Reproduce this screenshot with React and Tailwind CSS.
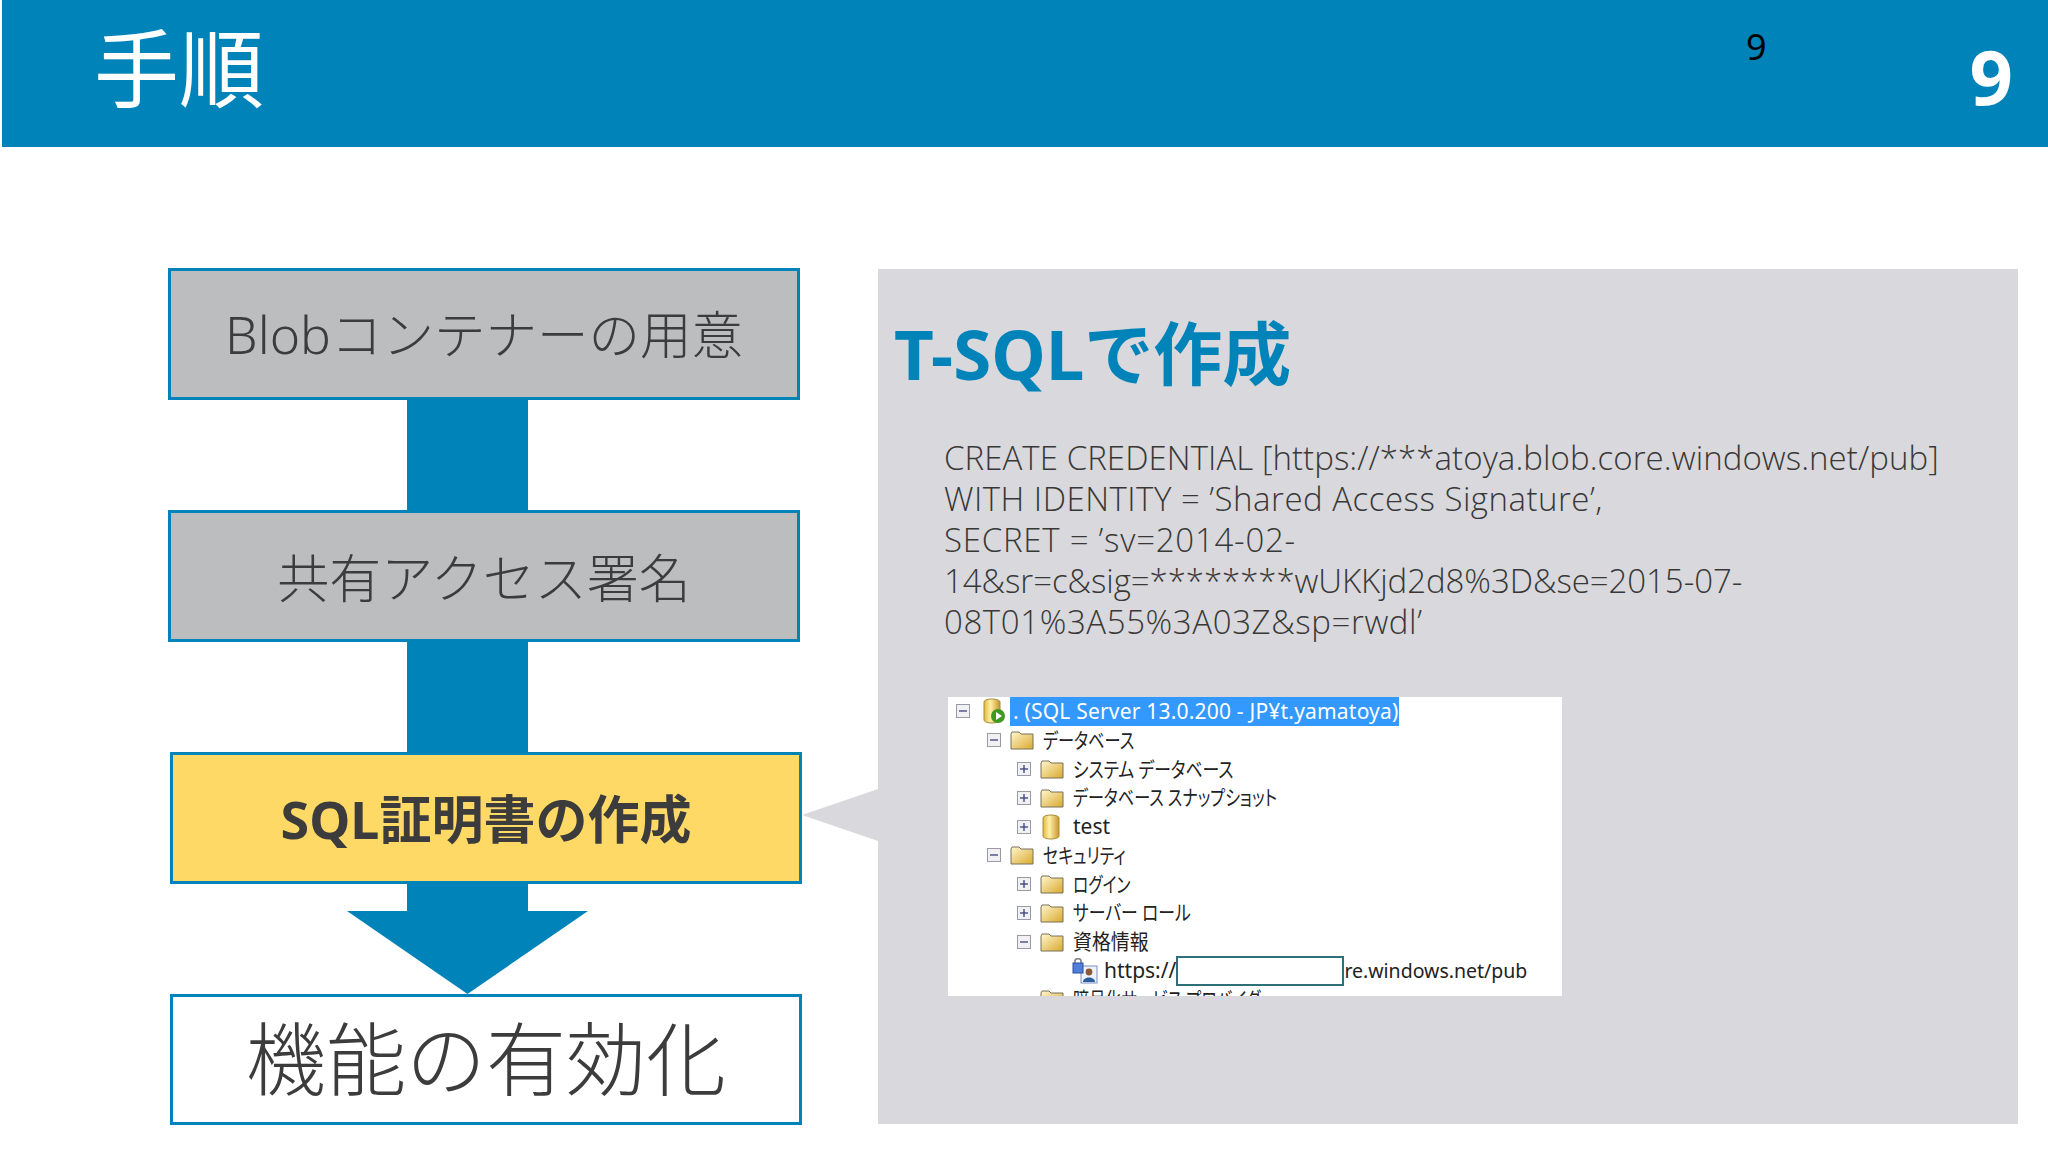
const jp = "font-['Noto_Sans','Noto_Sans_CJK_JP',sans-serif]";

const Folder = () => (
  <svg width="24" height="20" viewBox="0 0 24 20" className="shrink-0">
    <defs>
      <linearGradient id="fold" x1="0" y1="0" x2="1" y2="1">
        <stop offset="0" stopColor="#fff6cf" />
        <stop offset="1" stopColor="#dba92e" />
      </linearGradient>
    </defs>
    <path d="M1 4 L2 2 H9 L11 4 H23 V19 H1 Z" fill="url(#fold)" stroke="#77715a" strokeWidth="1" />
  </svg>
);

const Db = ({ running }) => (
  <svg width="24" height="26" viewBox="0 0 24 26" className="shrink-0">
    <defs>
      <linearGradient id="can" x1="0" y1="0" x2="1" y2="0">
        <stop offset="0" stopColor="#e2b93b" />
        <stop offset="0.4" stopColor="#fff0a8" />
        <stop offset="1" stopColor="#c9962a" />
      </linearGradient>
    </defs>
    <path d="M3 4 C3 0 19 0 19 4 V22 C19 26 3 26 3 22 Z" fill="url(#can)" stroke="#a98c3a" />
    {running && <circle cx="17" cy="18" r="7" fill="#3f9a22" />}
    {running && <path d="M15 14 L21 18 L15 22 Z" fill="#fff" />}
  </svg>
);

const Toggle = ({ open }) => (
  <svg width="14" height="14" viewBox="0 0 14 14" className="shrink-0">
    <rect x="0.5" y="0.5" width="13" height="13" fill="#f1f1f4" stroke="#9a9aa6" />
    <path d="M3 7 H11" stroke="#3a3f7c" strokeWidth="1.3" />
    {!open && <path d="M7 3 V11" stroke="#3a3f7c" strokeWidth="1.3" />}
  </svg>
);

const CredIcon = () => (
  <svg width="26" height="26" viewBox="0 0 26 26" className="shrink-0">
    <rect x="9" y="8" width="16" height="17" fill="#eef2fb" stroke="#7d90bd" />
    <circle cx="17" cy="14" r="3.4" fill="#8a5a33" />
    <path d="M11 24 C11 18 23 18 23 24 Z" fill="#2c5f9e" />
    <path d="M3 5 V3 C3 0 9 0 9 3 V5" fill="none" stroke="#7b7f8c" strokeWidth="1.6" />
    <rect x="1" y="5" width="10" height="10" fill="#4f7fdb" stroke="#2e4f9d" />
  </svg>
);

// the original tree font is a narrow UI gothic, so each label is squeezed to its width
const treeRows = [
  { pad: "pl-[39px]", open: true, icon: "folder", label: "データベース", squeeze: "scale-x-[0.77]" },
  { pad: "pl-[69px]", icon: "folder", label: "システム データベース", squeeze: "scale-x-[0.8]" },
  { pad: "pl-[69px]", icon: "folder", label: "データベース スナップショット", squeeze: "scale-x-[0.765]" },
  { pad: "pl-[69px]", icon: "db", label: "test", squeeze: "" },
  { pad: "pl-[39px]", open: true, icon: "folder", label: "セキュリティ", squeeze: "scale-x-[0.76]" },
  { pad: "pl-[69px]", icon: "folder", label: "ログイン", squeeze: "scale-x-[0.75]" },
  { pad: "pl-[69px]", icon: "folder", label: "サーバー ロール", squeeze: "scale-x-[0.8]" },
  { pad: "pl-[69px]", open: true, icon: "folder", label: "資格情報", squeeze: "scale-x-[0.9]" },
];

const Connector = () => <div className="ml-[239px] w-[121px] h-[110px] bg-[#0083b9]" />;

export default function App() {
  return (
    <div className={`w-[2048px] h-[1152px] bg-white overflow-hidden ${jp}`}>
      <header className="ml-[2px] h-[147px] bg-[#0083b9] flex">
        <h1 className="pl-[92px] pt-[10px] text-[85px] leading-[116px] font-normal text-white">手順</h1>
        <span className="ml-auto mt-[22px] text-[36px] leading-[50px] text-black">9</span>
        <span className="ml-[203px] mr-[35px] mt-[24px] text-[76px] leading-[104px] font-bold text-white">9</span>
      </header>

      <main className="flex pt-[121px]">
        <div className="ml-[168px] w-[641px] flex flex-col text-[#3c3c3c]">
          <div className="w-[632px] h-[132px] pt-[2px] bg-[#bcbdbf] border-[3px] border-[#0083b9] flex items-center justify-center text-[51.5px] font-light">
            Blobコンテナーの用意
          </div>
          <Connector />
          <div className="w-[632px] h-[132px] pt-[3px] bg-[#bcbdbf] border-[3px] border-[#0083b9] flex items-center justify-center text-[52px] font-light">
            共有アクセス署名
          </div>
          <Connector />
          <div className="relative ml-[2px] w-[632px] h-[132px] pt-[2px] bg-[#ffd966] border-[3px] border-[#0083b9] flex items-center justify-center text-[52px] font-bold">
            SQL証明書の作成
            <svg width="76" height="52" viewBox="0 0 76 52" className="absolute left-[629px] top-[34px]">
              <path d="M0 26 L76 0 V52 Z" fill="#d9d8dc" />
            </svg>
          </div>
          <div className="ml-[179px] w-[241px] h-[110px] flex flex-col items-center">
            <div className="w-[121px] h-[27px] bg-[#0083b9] shrink-0" />
            <svg width="241" height="83" viewBox="0 0 241 83" className="shrink-0">
              <path d="M0 0 H241 L120.5 83 Z" fill="#0083b9" />
            </svg>
          </div>
          <div className="ml-[2px] w-[632px] h-[131px] pb-[4px] bg-white border-[3px] border-[#0083b9] flex items-center justify-center text-[80px] font-light">
            機能の有効化
          </div>
        </div>

        <section className="ml-[69px] mt-[1px] w-[1140px] h-[855px] bg-[#d9d8dc]">
          <h2 className="pl-[16px] pt-[39px] h-[168px] text-[69px] leading-[90px] font-bold text-[#0083b9]">T-SQLで作成</h2>
          <p className="pl-[66px] text-[33px] leading-[41px] font-light text-[#383838] font-['Open_Sans','Noto_Sans_CJK_JP',sans-serif]">
            <span className="block tracking-[0.06px]">CREATE CREDENTIAL [https://***atoya.blob.core.windows.net/pub]</span>
            <span className="block tracking-[0.5px]">WITH IDENTITY = ’Shared Access Signature’,</span>
            <span className="block tracking-[0.75px]">SECRET = ’sv=2014-02-</span>
            <span className="block tracking-[-0.06px]">14&sr=c&sig=********wUKKjd2d8%3D&se=2015-07-</span>
            <span className="block tracking-[0.6px]">08T01%3A55%3A03Z&sp=rwdl’</span>
          </p>

          <div className="mt-[55px] ml-[70px] w-[614px] h-[299px] bg-white overflow-hidden text-[21px] leading-[29px] text-[#222] [font-feature-settings:'palt'] font-['Noto_Sans','Noto_Sans_CJK_JP',sans-serif]">
            <div className="h-[28.8px] pl-[8px] flex items-center">
              <Toggle open />
              <span className="ml-[11px]"><Db running /></span>
              <span className="ml-[5px] w-[389px] h-[29px] bg-[#3399ff] text-white pl-[3px] whitespace-nowrap tracking-[0.2px]">. (SQL Server 13.0.200 - JP¥t.yamatoya)</span>
            </div>
            {treeRows.map((row) => (
              <div key={row.label} className={`h-[28.8px] flex items-center ${row.pad}`}>
                <Toggle open={row.open} />
                <span className="ml-[9px] w-[24px] flex justify-center"><span className="block">{row.icon === "db" ? <Db /> : <Folder />}</span></span>
                <span className={`ml-[9px] whitespace-nowrap origin-left ${row.squeeze}`}>{row.label}</span>
              </div>
            ))}
            <div className="h-[28.8px] pl-[124px] flex items-center">
              <CredIcon />
              <span className="ml-[6px] whitespace-nowrap">https://</span>
              <span className="w-[168px] h-[30px] border-2 border-[#2f6f78] bg-white shrink-0" />
              <span className="whitespace-nowrap text-[19.5px]">re.windows.net/pub</span>
            </div>
            <div className="h-[28.8px] pl-[69px] flex items-center">
              <span className="w-[14px] shrink-0" />
              <span className="ml-[9px]"><Folder /></span>
              <span className="ml-[9px] whitespace-nowrap origin-left scale-x-[0.77]">暗号化サービス プロバイダ</span>
            </div>
          </div>
        </section>
      </main>
    </div>
  );
}
